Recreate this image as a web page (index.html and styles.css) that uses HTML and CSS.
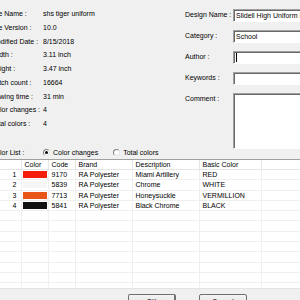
FILE: index.html
```html
<!DOCTYPE html>
<html lang="en">
<head>
    <meta charset="UTF-8">
    <title>Design Information</title>
    <link rel="stylesheet" href="styles.css">
</head>
<body>
    <div class="dialog">
        <div class="top">
            <div class="info">
                <div class="row"><span class="label">File Name :</span><span>shs tiger uniform</span></div>
                <div class="row"><span class="label">File Version :</span><span>10.0</span></div>
                <div class="row"><span class="label">Modified Date :</span><span>8/15/2018</span></div>
                <div class="row"><span class="label">Width :</span><span>3.11 inch</span></div>
                <div class="row"><span class="label">Height :</span><span>3.47 inch</span></div>
                <div class="row"><span class="label">Stitch count :</span><span>16664</span></div>
                <div class="row"><span class="label">Sewing time :</span><span>31 min</span></div>
                <div class="row"><span class="label">Color changes :</span><span>4</span></div>
                <div class="row"><span class="label">Total colors :</span><span>4</span></div>

                <div class="choice">
                    <span class="label">Color List :</span>
                    <label class="option"><span class="radio checked"></span>Color changes</label>
                    <label class="option"><span class="radio"></span>Total colors</label>
                </div>
            </div>

            <div class="meta">
                <div class="field"><span class="label">Design Name :</span><div class="input">Slidell High Uniform Logo</div></div>
                <div class="field"><span class="label">Category :</span><div class="input">School</div></div>
                <div class="field"><span class="label">Author :</span><div class="input"><span class="caret"></span></div></div>
                <div class="field"><span class="label">Keywords :</span><div class="input"></div></div>
                <div class="field comment"><span class="label">Comment :</span><div class="input"></div></div>
            </div>
        </div>

        <div class="list">
            <table id="colors-table">
                <colgroup>
                    <col class="c-num">
                    <col class="c-color">
                    <col class="c-code">
                    <col class="c-brand">
                    <col class="c-desc">
                    <col class="c-basic">
                    <col>
                </colgroup>
                <thead>
                    <tr>
                        <th></th>
                        <th>Color</th>
                        <th>Code</th>
                        <th>Brand</th>
                        <th>Description</th>
                        <th>Basic Color</th>
                        <th></th>
                    </tr>
                </thead>
                <tbody>
                    <tr><td class="num">1</td><td><div class="swatch red"></div></td><td>9170</td><td>RA Polyester</td><td>Miami Artillery</td><td>RED</td><td></td></tr>
                    <tr><td class="num">2</td><td><div class="swatch white"></div></td><td>5839</td><td>RA Polyester</td><td>Chrome</td><td>WHITE</td><td></td></tr>
                    <tr><td class="num">3</td><td><div class="swatch orange"></div></td><td>7713</td><td>RA Polyester</td><td>Honeysuckle</td><td>VERMILLION</td><td></td></tr>
                    <tr><td class="num">4</td><td><div class="swatch black"></div></td><td>5841</td><td>RA Polyester</td><td>Black Chrome</td><td>BLACK</td><td></td></tr>
                    <!-- empty rows of the list view -->
                    <tr><td></td><td></td><td></td><td></td><td></td><td></td><td></td></tr>
                    <tr><td></td><td></td><td></td><td></td><td></td><td></td><td></td></tr>
                    <tr><td></td><td></td><td></td><td></td><td></td><td></td><td></td></tr>
                    <tr><td></td><td></td><td></td><td></td><td></td><td></td><td></td></tr>
                    <tr><td></td><td></td><td></td><td></td><td></td><td></td><td></td></tr>
                    <tr><td></td><td></td><td></td><td></td><td></td><td></td><td></td></tr>
                    <tr><td></td><td></td><td></td><td></td><td></td><td></td><td></td></tr>
                    <tr><td></td><td></td><td></td><td></td><td></td><td></td><td></td></tr>
                    <tr><td></td><td></td><td></td><td></td><td></td><td></td><td></td></tr>
                    <tr><td></td><td></td><td></td><td></td><td></td><td></td><td></td></tr>
                </tbody>
            </table>
        </div>

        <div class="buttons">
            <button class="btn default">OK</button>
            <button class="btn">Cancel</button>
        </div>
    </div>
</body>
</html>
```

FILE: styles.css
```css
body {
    margin: 0;
    padding: 0;
    overflow: hidden;
    background-color: #f0f0f0;
    font-family: "Liberation Sans", Arial, sans-serif;
    font-size: 7px;
    color: #000;
}

/* Dialog is wider than the window, left edge is cut off */
.dialog {
    width: 380px;
    margin-left: -9px;
}

.top {
    display: flex;
    align-items: flex-start;
}

/* Left info column */
.info {
    width: 194px;
    padding-top: 7px;
}

.row {
    display: flex;
    height: 13.75px;
    line-height: 13.75px;
}

.label {
    width: 52px;
    flex-shrink: 0;
    white-space: nowrap;
}

.choice {
    display: flex;
    align-items: center;
    height: 10px;
    margin-top: 16.25px;
}

.option {
    display: flex;
    align-items: center;
    margin-right: 15px;
    white-space: nowrap;
}

.radio {
    position: relative;
    width: 5px;
    height: 5px;
    margin-right: 3px;
    border: 1px solid;
    border-color: #808080 #e3e3e3 #e3e3e3 #808080;
    border-radius: 50%;
    background-color: #fff;
}

.radio.checked::after {
    content: "";
    position: absolute;
    left: 1px;
    top: 1px;
    width: 3px;
    height: 3px;
    border-radius: 50%;
    background-color: #000;
}

/* Right meta column */
.meta {
    flex: 1;
    padding-top: 9px;
}

.field {
    display: flex;
    height: 13px;
    margin-bottom: 7.9px;
}

.field .label {
    width: 48px;
    line-height: 12px;
}

.field.comment {
    height: 56px;
}

.input {
    flex: 1;
    box-sizing: border-box;
    padding-left: 2px;
    line-height: 11px;
    white-space: nowrap;
    overflow: hidden;
    background-color: #fff;
    border: 1px solid;
    border-color: #a0a0a0 #fff #fff #a0a0a0;
    box-shadow: inset 1px 1px 0 #696969;
}

.caret {
    display: inline-block;
    width: 1px;
    height: 9px;
    margin-top: 1px;
    vertical-align: top;
    background-color: #000;
}

/* Color list view */
.list {
    box-sizing: border-box;
    margin-top: 2px;
    width: 360px;
    height: 130px;
    overflow: hidden;
    background-color: #fff;
    border-top: 1px solid #a0a0a0;
    border-bottom: 1px solid #e3e3e3;
}

table {
    width: 100%;
    table-layout: fixed;
    border-collapse: collapse;
}

.c-num { width: 30px; }
.c-color { width: 27px; }
.c-code { width: 27px; }
.c-brand { width: 57px; }
.c-desc { width: 67px; }
.c-basic { width: 62px; }

th, td {
    padding: 0 0 0 3px;
    text-align: left;
    font-weight: normal;
    white-space: nowrap;
    overflow: hidden;
}

th {
    height: 9px;
    line-height: 9px;
    border-right: 1px solid #e5e5e5;
    border-bottom: 1px solid #e5e5e5;
}

td {
    height: 9.3px;
    line-height: 9px;
    border-right: 1px solid #efefef;
    border-bottom: 1px solid #efefef;
}

td.num {
    text-align: right;
    padding: 0 4px 0 0;
}

.swatch {
    height: 7px;
    margin-left: -2px;
    margin-right: 1px;
}

.red { background-color: #f51d0c; }
.white { background-color: #f6f6f6; }
.orange { background-color: #e9561a; }
.black { background-color: #111; }

/* Bottom buttons */
.buttons {
    display: flex;
    padding: 5px 0 0 137px;
    gap: 23px;
}

.btn {
    width: 48px;
    height: 16px;
    padding: 0;
    font-family: inherit;
    font-size: 7px;
    line-height: 10px;
    background: linear-gradient(#f2f2f2, #e2e2e2);
    border: 1px solid #707070;
    border-radius: 2px;
}

.btn.default {
    border-right-width: 2px;
}
```
